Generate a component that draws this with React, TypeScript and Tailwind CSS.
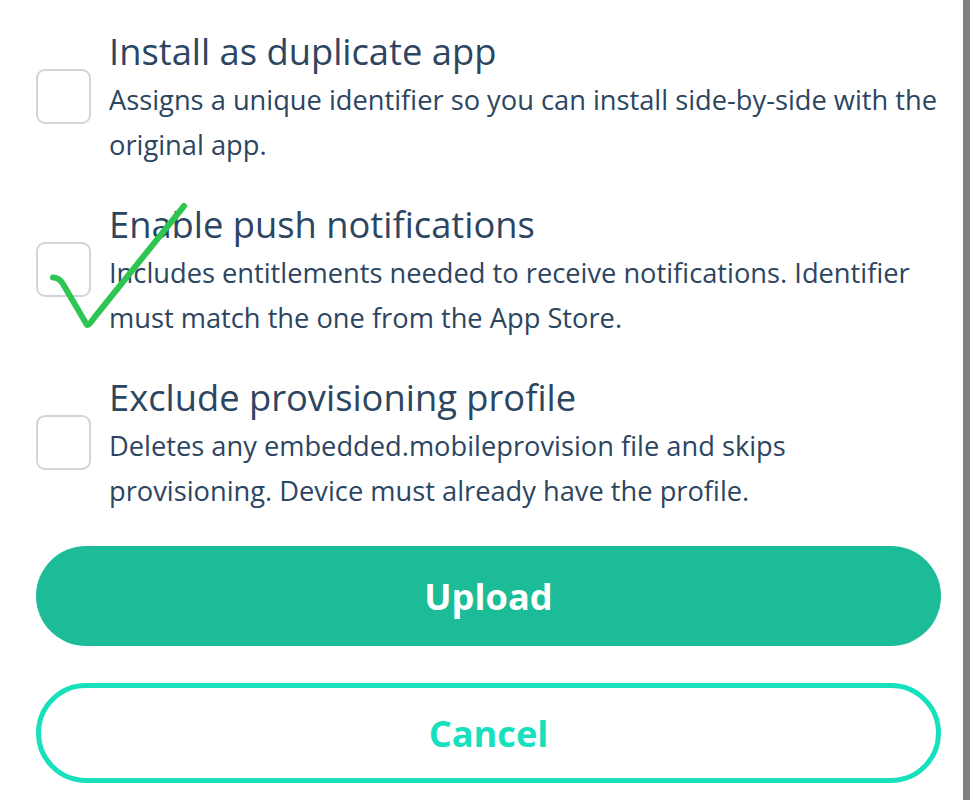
const options = [
  {
    title: 'Install as duplicate app',
    lines: ['Assigns a unique identifier so you can install side-by-side with the', 'original app.'],
  },
  {
    title: 'Enable push notifications',
    lines: ['Includes entitlements needed to receive notifications. Identifier', 'must match the one from the App Store.'],
  },
  {
    title: 'Exclude provisioning profile',
    lines: ['Deletes any embedded.mobileprovision file and skips', 'provisioning. Device must already have the profile.'],
  },
];

function OptionRow({ title, lines }: { title: string; lines: string[] }) {
  return (
    <div className="flex h-[173px] items-start">
      <div className="mt-[40px] h-[55px] w-[55px] shrink-0 rounded-[9px] border-[2.5px] border-[#d3d3da] bg-white" />
      <div className="ml-[18px] whitespace-nowrap">
        <div className="mt-[-2px] h-[50px] text-[36.3px] leading-[48px] text-[#2c4561]">{title}</div>
        <div className="text-[27.25px] leading-[45px] text-[#2c4561]">
          {lines.map((line) => (
            <div key={line}>{line}</div>
          ))}
        </div>
      </div>
    </div>
  );
}

export default function App() {
  return (
    <div className="relative flex h-[800px] w-[977px] overflow-hidden bg-white font-['Open_Sans',sans-serif]">
      <div className="w-[963px] pl-[36px] pr-[22px] pt-[29px]">
        {options.map((option) => (
          <OptionRow key={option.title} title={option.title} lines={option.lines} />
        ))}
        <button className="mt-[-2px] flex h-[100px] w-full items-center justify-center rounded-full bg-[#1cbc98] text-[36.2px] font-bold text-white">
          Upload
        </button>
        <button className="mt-[37px] flex h-[100px] w-full items-center justify-center rounded-full border-[5px] border-[#17e0bd] bg-white text-[36.2px] font-bold text-[#17e0bd]">
          Cancel
        </button>
      </div>
      <div className="h-full w-[7px] bg-[#808080]" />

      {/* hand drawn check mark on top of the second row */}
      <svg className="absolute left-0 top-0" width="977" height="800" fill="none">
        <path
          d="M53 277.5 C57 277.5 60 279 63 284 L87 325 C90 325 92 320 98 313 L184 206"
          stroke="#2fc552"
          strokeWidth="6"
          strokeLinecap="round"
          strokeLinejoin="round"
        />
      </svg>
    </div>
  );
}
